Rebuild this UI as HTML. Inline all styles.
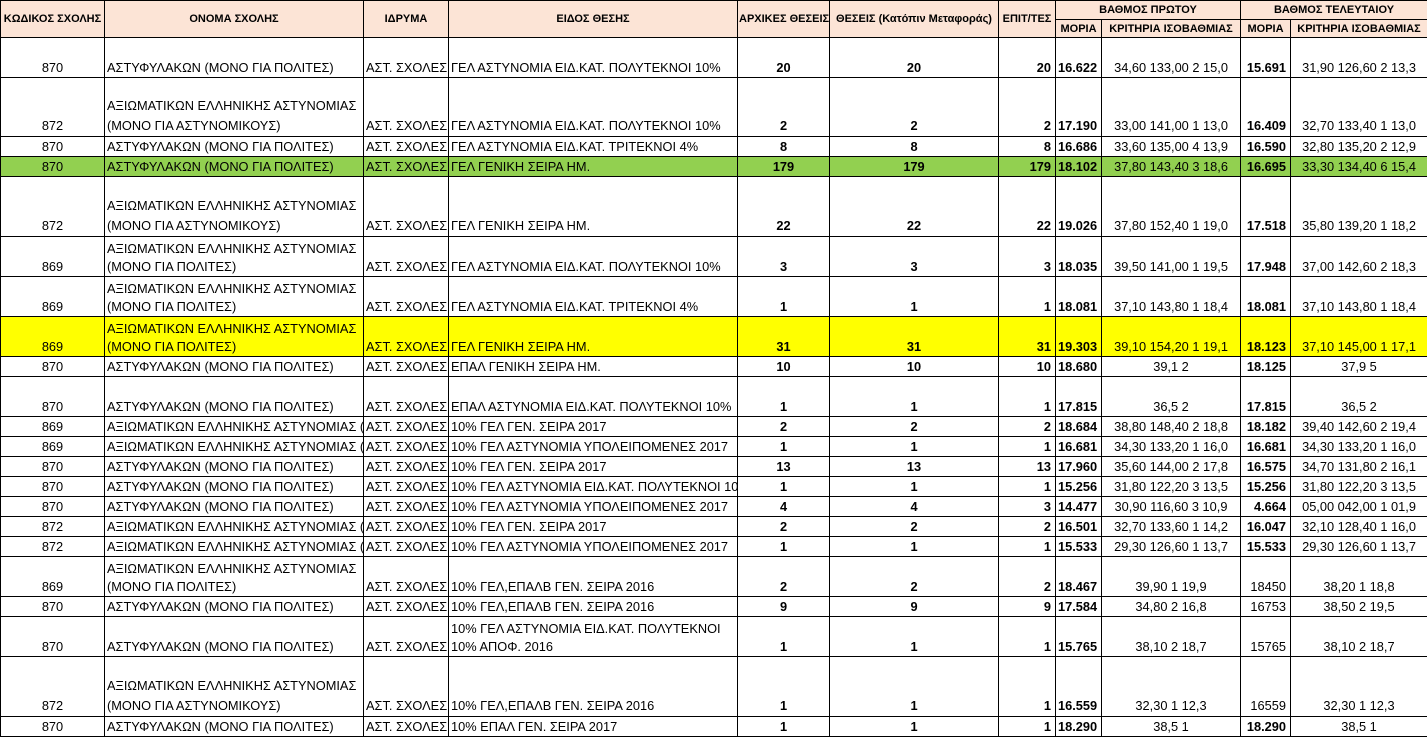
<!DOCTYPE html>
<html><head><meta charset="utf-8">
<style>
html,body{margin:0;padding:0;background:#fff;width:1427px;height:737px;overflow:hidden}
table{border-collapse:collapse;table-layout:fixed;width:1427px;font-family:"Liberation Sans",sans-serif;font-size:12.8px;color:#000}
td{border:1px solid #000;padding:0 2px 0 2px;vertical-align:bottom;white-space:nowrap;overflow:hidden;line-height:18px;box-sizing:border-box}
th{border:1px solid #000;background:#fce4d6;font-weight:bold;font-size:11px;padding:0 1px;line-height:16px;white-space:nowrap;overflow:hidden}
.c{text-align:center}.r{text-align:right;padding-right:4px}.b{font-weight:bold}
.g td{background:#92d050}.y td{background:#ffff00}
.t td{line-height:20px}
</style></head><body>
<table>
<colgroup><col style="width:104px"><col style="width:259px"><col style="width:85px"><col style="width:289px"><col style="width:92px"><col style="width:169px"><col style="width:57px"><col style="width:46px"><col style="width:139px"><col style="width:50px"><col style="width:137px"></colgroup>
<tr style="height:19px"><th rowspan="2">ΚΩΔΙΚΟΣ ΣΧΟΛΗΣ</th><th rowspan="2">ΟΝΟΜΑ ΣΧΟΛΗΣ</th><th rowspan="2">ΙΔΡΥΜΑ</th><th rowspan="2">ΕΙΔΟΣ ΘΕΣΗΣ</th><th rowspan="2">ΑΡΧΙΚΕΣ ΘΕΣΕΙΣ</th><th rowspan="2">ΘΕΣΕΙΣ (Κατόπιν Μεταφοράς)</th><th rowspan="2">ΕΠΙΤ/ΤΕΣ</th><th colspan="2">ΒΑΘΜΟΣ ΠΡΩΤΟΥ</th><th colspan="2">ΒΑΘΜΟΣ ΤΕΛΕΥΤΑΙΟΥ</th></tr>
<tr style="height:18px"><th>ΜΟΡΙΑ</th><th>ΚΡΙΤΗΡΙΑ ΙΣΟΒΑΘΜΙΑΣ</th><th>ΜΟΡΙΑ</th><th>ΚΡΙΤΗΡΙΑ ΙΣΟΒΑΘΜΙΑΣ</th></tr>

<tr style="height:40px"><td class="c">870</td><td>ΑΣΤΥΦΥΛΑΚΩΝ (ΜΟΝΟ ΓΙΑ ΠΟΛΙΤΕΣ)</td><td>ΑΣΤ. ΣΧΟΛΕΣ</td><td>ΓΕΛ ΑΣΤΥΝΟΜΙΑ ΕΙΔ.ΚΑΤ. ΠΟΛΥΤΕΚΝΟΙ 10%</td><td class="c b">20</td><td class="c b">20</td><td class="r b">20</td><td class="r b">16.622</td><td class="c">34,60 133,00 2 15,0</td><td class="r b">15.691</td><td class="c">31,90 126,60 2 13,3</td></tr>
<tr class="t" style="height:59px"><td class="c">872</td><td>ΑΞΙΩΜΑΤΙΚΩΝ ΕΛΛΗΝΙΚΗΣ ΑΣΤΥΝΟΜΙΑΣ<br>(ΜΟΝΟ ΓΙΑ ΑΣΤΥΝΟΜΙΚΟΥΣ)</td><td>ΑΣΤ. ΣΧΟΛΕΣ</td><td>ΓΕΛ ΑΣΤΥΝΟΜΙΑ ΕΙΔ.ΚΑΤ. ΠΟΛΥΤΕΚΝΟΙ 10%</td><td class="c b">2</td><td class="c b">2</td><td class="r b">2</td><td class="r b">17.190</td><td class="c">33,00 141,00 1 13,0</td><td class="r b">16.409</td><td class="c">32,70 133,40 1 13,0</td></tr>
<tr style="height:20px"><td class="c">870</td><td>ΑΣΤΥΦΥΛΑΚΩΝ (ΜΟΝΟ ΓΙΑ ΠΟΛΙΤΕΣ)</td><td>ΑΣΤ. ΣΧΟΛΕΣ</td><td>ΓΕΛ ΑΣΤΥΝΟΜΙΑ ΕΙΔ.ΚΑΤ. ΤΡΙΤΕΚΝΟΙ 4%</td><td class="c b">8</td><td class="c b">8</td><td class="r b">8</td><td class="r b">16.686</td><td class="c">33,60 135,00 4 13,9</td><td class="r b">16.590</td><td class="c">32,80 135,20 2 12,9</td></tr>
<tr class="g" style="height:20px"><td class="c">870</td><td>ΑΣΤΥΦΥΛΑΚΩΝ (ΜΟΝΟ ΓΙΑ ΠΟΛΙΤΕΣ)</td><td>ΑΣΤ. ΣΧΟΛΕΣ</td><td>ΓΕΛ ΓΕΝΙΚΗ ΣΕΙΡΑ ΗΜ.</td><td class="c b">179</td><td class="c b">179</td><td class="r b">179</td><td class="r b">18.102</td><td class="c">37,80 143,40 3 18,6</td><td class="r b">16.695</td><td class="c">33,30 134,40 6 15,4</td></tr>
<tr class="t" style="height:60px"><td class="c">872</td><td>ΑΞΙΩΜΑΤΙΚΩΝ ΕΛΛΗΝΙΚΗΣ ΑΣΤΥΝΟΜΙΑΣ<br>(ΜΟΝΟ ΓΙΑ ΑΣΤΥΝΟΜΙΚΟΥΣ)</td><td>ΑΣΤ. ΣΧΟΛΕΣ</td><td>ΓΕΛ ΓΕΝΙΚΗ ΣΕΙΡΑ ΗΜ.</td><td class="c b">22</td><td class="c b">22</td><td class="r b">22</td><td class="r b">19.026</td><td class="c">37,80 152,40 1 19,0</td><td class="r b">17.518</td><td class="c">35,80 139,20 1 18,2</td></tr>
<tr style="height:40px"><td class="c">869</td><td>ΑΞΙΩΜΑΤΙΚΩΝ ΕΛΛΗΝΙΚΗΣ ΑΣΤΥΝΟΜΙΑΣ<br>(ΜΟΝΟ ΓΙΑ ΠΟΛΙΤΕΣ)</td><td>ΑΣΤ. ΣΧΟΛΕΣ</td><td>ΓΕΛ ΑΣΤΥΝΟΜΙΑ ΕΙΔ.ΚΑΤ. ΠΟΛΥΤΕΚΝΟΙ 10%</td><td class="c b">3</td><td class="c b">3</td><td class="r b">3</td><td class="r b">18.035</td><td class="c">39,50 141,00 1 19,5</td><td class="r b">17.948</td><td class="c">37,00 142,60 2 18,3</td></tr>
<tr style="height:40px"><td class="c">869</td><td>ΑΞΙΩΜΑΤΙΚΩΝ ΕΛΛΗΝΙΚΗΣ ΑΣΤΥΝΟΜΙΑΣ<br>(ΜΟΝΟ ΓΙΑ ΠΟΛΙΤΕΣ)</td><td>ΑΣΤ. ΣΧΟΛΕΣ</td><td>ΓΕΛ ΑΣΤΥΝΟΜΙΑ ΕΙΔ.ΚΑΤ. ΤΡΙΤΕΚΝΟΙ 4%</td><td class="c b">1</td><td class="c b">1</td><td class="r b">1</td><td class="r b">18.081</td><td class="c">37,10 143,80 1 18,4</td><td class="r b">18.081</td><td class="c">37,10 143,80 1 18,4</td></tr>
<tr class="y" style="height:40px"><td class="c">869</td><td>ΑΞΙΩΜΑΤΙΚΩΝ ΕΛΛΗΝΙΚΗΣ ΑΣΤΥΝΟΜΙΑΣ<br>(ΜΟΝΟ ΓΙΑ ΠΟΛΙΤΕΣ)</td><td>ΑΣΤ. ΣΧΟΛΕΣ</td><td>ΓΕΛ ΓΕΝΙΚΗ ΣΕΙΡΑ ΗΜ.</td><td class="c b">31</td><td class="c b">31</td><td class="r b">31</td><td class="r b">19.303</td><td class="c">39,10 154,20 1 19,1</td><td class="r b">18.123</td><td class="c">37,10 145,00 1 17,1</td></tr>
<tr style="height:20px"><td class="c">870</td><td>ΑΣΤΥΦΥΛΑΚΩΝ (ΜΟΝΟ ΓΙΑ ΠΟΛΙΤΕΣ)</td><td>ΑΣΤ. ΣΧΟΛΕΣ</td><td>ΕΠΑΛ ΓΕΝΙΚΗ ΣΕΙΡΑ ΗΜ.</td><td class="c b">10</td><td class="c b">10</td><td class="r b">10</td><td class="r b">18.680</td><td class="c">39,1 2</td><td class="r b">18.125</td><td class="c">37,9 5</td></tr>
<tr style="height:40px"><td class="c">870</td><td>ΑΣΤΥΦΥΛΑΚΩΝ (ΜΟΝΟ ΓΙΑ ΠΟΛΙΤΕΣ)</td><td>ΑΣΤ. ΣΧΟΛΕΣ</td><td>ΕΠΑΛ ΑΣΤΥΝΟΜΙΑ ΕΙΔ.ΚΑΤ. ΠΟΛΥΤΕΚΝΟΙ 10%</td><td class="c b">1</td><td class="c b">1</td><td class="r b">1</td><td class="r b">17.815</td><td class="c">36,5 2</td><td class="r b">17.815</td><td class="c">36,5 2</td></tr>
<tr style="height:20px"><td class="c">869</td><td>ΑΞΙΩΜΑΤΙΚΩΝ ΕΛΛΗΝΙΚΗΣ ΑΣΤΥΝΟΜΙΑΣ (ΜΟΝΟ</td><td>ΑΣΤ. ΣΧΟΛΕΣ</td><td>10% ΓΕΛ ΓΕΝ. ΣΕΙΡΑ 2017</td><td class="c b">2</td><td class="c b">2</td><td class="r b">2</td><td class="r b">18.684</td><td class="c">38,80 148,40 2 18,8</td><td class="r b">18.182</td><td class="c">39,40 142,60 2 19,4</td></tr>
<tr style="height:20px"><td class="c">869</td><td>ΑΞΙΩΜΑΤΙΚΩΝ ΕΛΛΗΝΙΚΗΣ ΑΣΤΥΝΟΜΙΑΣ (ΜΟΝΟ</td><td>ΑΣΤ. ΣΧΟΛΕΣ</td><td>10% ΓΕΛ ΑΣΤΥΝΟΜΙΑ ΥΠΟΛΕΙΠΟΜΕΝΕΣ 2017</td><td class="c b">1</td><td class="c b">1</td><td class="r b">1</td><td class="r b">16.681</td><td class="c">34,30 133,20 1 16,0</td><td class="r b">16.681</td><td class="c">34,30 133,20 1 16,0</td></tr>
<tr style="height:20px"><td class="c">870</td><td>ΑΣΤΥΦΥΛΑΚΩΝ (ΜΟΝΟ ΓΙΑ ΠΟΛΙΤΕΣ)</td><td>ΑΣΤ. ΣΧΟΛΕΣ</td><td>10% ΓΕΛ ΓΕΝ. ΣΕΙΡΑ 2017</td><td class="c b">13</td><td class="c b">13</td><td class="r b">13</td><td class="r b">17.960</td><td class="c">35,60 144,00 2 17,8</td><td class="r b">16.575</td><td class="c">34,70 131,80 2 16,1</td></tr>
<tr style="height:20px"><td class="c">870</td><td>ΑΣΤΥΦΥΛΑΚΩΝ (ΜΟΝΟ ΓΙΑ ΠΟΛΙΤΕΣ)</td><td>ΑΣΤ. ΣΧΟΛΕΣ</td><td>10% ΓΕΛ ΑΣΤΥΝΟΜΙΑ ΕΙΔ.ΚΑΤ. ΠΟΛΥΤΕΚΝΟΙ 10%</td><td class="c b">1</td><td class="c b">1</td><td class="r b">1</td><td class="r b">15.256</td><td class="c">31,80 122,20 3 13,5</td><td class="r b">15.256</td><td class="c">31,80 122,20 3 13,5</td></tr>
<tr style="height:20px"><td class="c">870</td><td>ΑΣΤΥΦΥΛΑΚΩΝ (ΜΟΝΟ ΓΙΑ ΠΟΛΙΤΕΣ)</td><td>ΑΣΤ. ΣΧΟΛΕΣ</td><td>10% ΓΕΛ ΑΣΤΥΝΟΜΙΑ ΥΠΟΛΕΙΠΟΜΕΝΕΣ 2017</td><td class="c b">4</td><td class="c b">4</td><td class="r b">3</td><td class="r b">14.477</td><td class="c">30,90 116,60 3 10,9</td><td class="r b">4.664</td><td class="c">05,00 042,00 1 01,9</td></tr>
<tr style="height:20px"><td class="c">872</td><td>ΑΞΙΩΜΑΤΙΚΩΝ ΕΛΛΗΝΙΚΗΣ ΑΣΤΥΝΟΜΙΑΣ (ΜΟΝΟ</td><td>ΑΣΤ. ΣΧΟΛΕΣ</td><td>10% ΓΕΛ ΓΕΝ. ΣΕΙΡΑ 2017</td><td class="c b">2</td><td class="c b">2</td><td class="r b">2</td><td class="r b">16.501</td><td class="c">32,70 133,60 1 14,2</td><td class="r b">16.047</td><td class="c">32,10 128,40 1 16,0</td></tr>
<tr style="height:20px"><td class="c">872</td><td>ΑΞΙΩΜΑΤΙΚΩΝ ΕΛΛΗΝΙΚΗΣ ΑΣΤΥΝΟΜΙΑΣ (ΜΟΝΟ</td><td>ΑΣΤ. ΣΧΟΛΕΣ</td><td>10% ΓΕΛ ΑΣΤΥΝΟΜΙΑ ΥΠΟΛΕΙΠΟΜΕΝΕΣ 2017</td><td class="c b">1</td><td class="c b">1</td><td class="r b">1</td><td class="r b">15.533</td><td class="c">29,30 126,60 1 13,7</td><td class="r b">15.533</td><td class="c">29,30 126,60 1 13,7</td></tr>
<tr style="height:40px"><td class="c">869</td><td>ΑΞΙΩΜΑΤΙΚΩΝ ΕΛΛΗΝΙΚΗΣ ΑΣΤΥΝΟΜΙΑΣ<br>(ΜΟΝΟ ΓΙΑ ΠΟΛΙΤΕΣ)</td><td>ΑΣΤ. ΣΧΟΛΕΣ</td><td>10% ΓΕΛ,ΕΠΑΛΒ ΓΕΝ. ΣΕΙΡΑ 2016</td><td class="c b">2</td><td class="c b">2</td><td class="r b">2</td><td class="r b">18.467</td><td class="c">39,90 1 19,9</td><td class="r">18450</td><td class="c">38,20 1 18,8</td></tr>
<tr style="height:20px"><td class="c">870</td><td>ΑΣΤΥΦΥΛΑΚΩΝ (ΜΟΝΟ ΓΙΑ ΠΟΛΙΤΕΣ)</td><td>ΑΣΤ. ΣΧΟΛΕΣ</td><td>10% ΓΕΛ,ΕΠΑΛΒ ΓΕΝ. ΣΕΙΡΑ 2016</td><td class="c b">9</td><td class="c b">9</td><td class="r b">9</td><td class="r b">17.584</td><td class="c">34,80 2 16,8</td><td class="r">16753</td><td class="c">38,50 2 19,5</td></tr>
<tr style="height:40px"><td class="c">870</td><td>ΑΣΤΥΦΥΛΑΚΩΝ (ΜΟΝΟ ΓΙΑ ΠΟΛΙΤΕΣ)</td><td>ΑΣΤ. ΣΧΟΛΕΣ</td><td>10% ΓΕΛ ΑΣΤΥΝΟΜΙΑ ΕΙΔ.ΚΑΤ. ΠΟΛΥΤΕΚΝΟΙ<br>10% ΑΠΟΦ. 2016</td><td class="c b">1</td><td class="c b">1</td><td class="r b">1</td><td class="r b">15.765</td><td class="c">38,10 2 18,7</td><td class="r">15765</td><td class="c">38,10 2 18,7</td></tr>
<tr class="t" style="height:60px"><td class="c">872</td><td>ΑΞΙΩΜΑΤΙΚΩΝ ΕΛΛΗΝΙΚΗΣ ΑΣΤΥΝΟΜΙΑΣ<br>(ΜΟΝΟ ΓΙΑ ΑΣΤΥΝΟΜΙΚΟΥΣ)</td><td>ΑΣΤ. ΣΧΟΛΕΣ</td><td>10% ΓΕΛ,ΕΠΑΛΒ ΓΕΝ. ΣΕΙΡΑ 2016</td><td class="c b">1</td><td class="c b">1</td><td class="r b">1</td><td class="r b">16.559</td><td class="c">32,30 1 12,3</td><td class="r">16559</td><td class="c">32,30 1 12,3</td></tr>
<tr style="height:20px"><td class="c">870</td><td>ΑΣΤΥΦΥΛΑΚΩΝ (ΜΟΝΟ ΓΙΑ ΠΟΛΙΤΕΣ)</td><td>ΑΣΤ. ΣΧΟΛΕΣ</td><td>10% ΕΠΑΛ ΓΕΝ. ΣΕΙΡΑ 2017</td><td class="c b">1</td><td class="c b">1</td><td class="r b">1</td><td class="r b">18.290</td><td class="c">38,5 1</td><td class="r b">18.290</td><td class="c">38,5 1</td></tr>
</table>
</body></html>
